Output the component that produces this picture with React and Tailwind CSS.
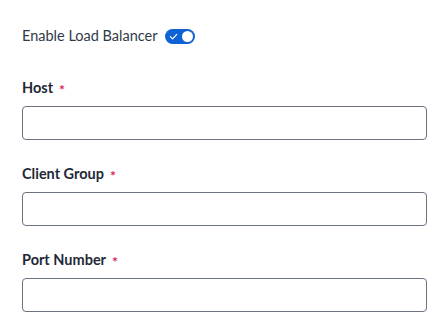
import React from "react";

function Toggle() {
  return (
    <span className="relative inline-flex h-[15px] w-[30px] items-center rounded-full bg-[#0f62d6]">
      <svg className="absolute left-[4px] top-[3px] h-[9px] w-[9px]" viewBox="0 0 10 10" fill="none">
        <path d="M1.5 5.2 L4 7.6 L8.6 2.6" stroke="white" strokeWidth="1.3" strokeLinecap="round" strokeLinejoin="round" />
      </svg>
      <span className="absolute right-[2px] top-[2px] h-[11px] w-[11px] rounded-full bg-white" />
    </span>
  );
}

function Field({ label }) {
  return (
    <div className="flex flex-col gap-2">
      <label className="flex h-5 items-center gap-[6px] text-[14.5px] leading-5 font-bold text-[#1f2937]">
        {label}
        <span className="translate-y-[2px] text-[14px] font-bold text-[#d9245c]">*</span>
      </label>
      <input
        type="text"
        className="h-[34px] w-full rounded-[4px] border border-[#6b7280] bg-white px-2 outline-none"
      />
    </div>
  );
}

export default function App() {
  const fields = ["Host", "Client Group", "Port Number"];

  return (
    <div
      className="h-[328px] w-[445px] bg-white pl-[22px] pr-[18px] pt-[26px]"
      style={{ fontFamily: "Lato, 'Open Sans', sans-serif" }}
    >
      <div className="flex h-5 items-center gap-2">
        <span className="text-[14.5px] leading-5 text-[#2f3a48]">Enable Load Balancer</span>
        <Toggle />
      </div>
      <div className="mt-8 flex flex-col gap-6">
        {fields.map((f) => (
          <Field key={f} label={f} />
        ))}
      </div>
    </div>
  );
}
